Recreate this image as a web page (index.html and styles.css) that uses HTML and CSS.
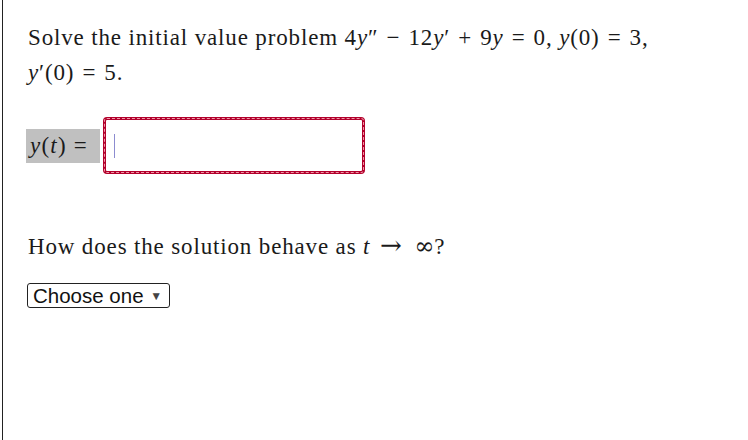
FILE: index.html
```html
<!DOCTYPE html>
<html lang="en">
<head>
    <meta charset="UTF-8">
    <title>Initial value problem</title>
    <link rel="stylesheet" href="styles.css">
</head>
<body>
    <div class="panel">
        <p class="question">
            Solve the initial value problem <span class="m">4<i>y</i>″ <b>−</b> 12<i>y</i>′ <b>+</b> 9<i>y</i> <b>=</b> 0,</span> <span class="m"><i>y</i>(0) <b>=</b> 3,</span>
            <span class="m"><i>y</i>′(0) <b>=</b> 5.</span>
        </p>

        <div class="answer-row">
            <span class="answer-label"><i>y</i>(<i>t</i>) <b>=</b></span>
            <div class="answer-input"><span class="caret"></span></div>
        </div>

        <p class="question second">How does the solution behave as <span class="m"><i>t</i> <span class="sym arrow-sym">→</span> <span class="sym inf">∞</span>?</span></p>

        <div class="choose">Choose one <span class="arrow">▼</span></div>
    </div>
</body>
</html>
```

FILE: styles.css
```css
body {
    margin: 0;
    padding: 0;
    background: #ffffff;
    color: #1a1a1a;
}

.panel {
    margin-left: 2px;
    border-left: 1px solid #222;
    height: 440px;
    box-sizing: border-box;
    padding: 20px 0 0 25px;
    display: flex;
    flex-direction: column;
    align-items: flex-start;
}

.question {
    margin: 0;
    width: 660px;
    font-family: "Liberation Serif", "DejaVu Serif", serif;
    font-size: 23px;
    letter-spacing: 0.85px;
    line-height: 35px;
}

.m {
    white-space: nowrap;
}

.question i,
.answer-label i {
    font-style: italic;
}

/* operators in the formulas */
.question b,
.answer-label b {
    font-weight: normal;
    margin: 0 1.5px;
}

.sym {
    font-family: "DejaVu Serif", serif;
    font-size: 24px;
    letter-spacing: 0;
}

.arrow-sym {
    font-size: 26px;
    margin: 0 3px;
}

.inf {
    margin-left: 3px;
}

.answer-row {
    display: flex;
    align-items: center;
    margin-top: 27px;
    margin-left: -2px;
}

.answer-label {
    background-color: #c0c0c0;
    font-family: "Liberation Serif", "DejaVu Serif", serif;
    font-size: 23px;
    letter-spacing: 1.2px;
    width: 74px;
    height: 34px;
    line-height: 34px;
    padding-left: 4px;
    box-sizing: border-box;
    margin-right: 3px;
    white-space: nowrap;
}

.answer-label b {
    margin: 0;
}

.answer-input {
    width: 262px;
    height: 57px;
    box-sizing: border-box;
    border: 3px solid #b2002b;
    outline: 1px dashed rgba(255, 190, 200, 0.8);
    outline-offset: -2px;
    border-radius: 4px;
    display: flex;
    align-items: center;
    padding-left: 8px;
}

.caret {
    width: 1px;
    height: 24px;
    background-color: #8c8cd0;
}

.second {
    margin-top: 54px;
}

.choose {
    margin-top: 19px;
    margin-left: -1px;
    height: 25px;
    box-sizing: border-box;
    border: 1px solid #222;
    border-radius: 3px;
    padding: 0 7px 0 5px;
    font-family: "Liberation Sans", Arial, sans-serif;
    font-size: 20.5px;
    line-height: 23px;
    color: #111;
}

.arrow {
    font-size: 12px;
    color: #444;
    vertical-align: 3px;
    margin-left: 1px;
}
```
